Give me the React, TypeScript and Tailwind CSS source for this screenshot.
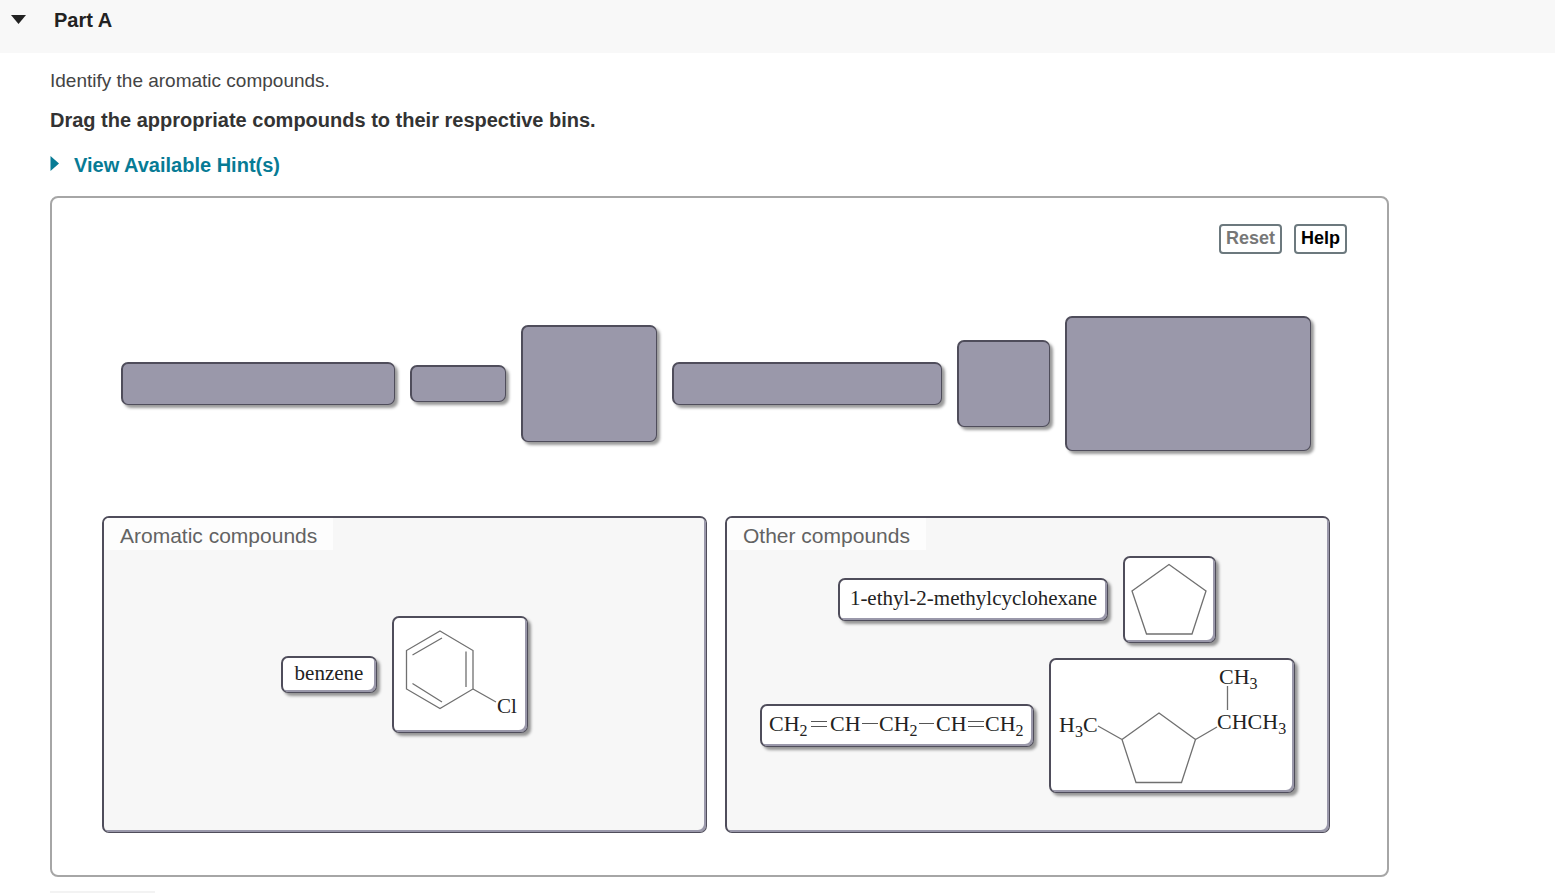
import React from "react";

interface ITileProps {
  className: string;
  children?: React.ReactNode;
}

interface IBinProps {
  title: string;
  children: React.ReactNode;
}

const slots = [
  "w-[274px] h-[43px]",
  "w-[96px] h-[37px]",
  "w-[136px] h-[117px]",
  "w-[270px] h-[43px]",
  "w-[93px] h-[87px]",
  "w-[246px] h-[135px]",
];

const Tile: React.FC<ITileProps> = ({ className, children }) => {
  return (
    <div
      draggable
      className={`flex shrink-0 cursor-move items-center justify-center rounded-[7px] border border-t-2 border-l-2 border-[#4f4d5b] bg-white font-['Liberation_Serif',serif] text-[21px] text-[#222] shadow-[inset_-2px_-2px_0_#9a98aa,3px_3px_3px_rgba(0,0,0,0.4)] ${className}`}
    >
      {children}
    </div>
  );
};

const Bin: React.FC<IBinProps> = ({ title, children }) => {
  return (
    <section className="flex min-h-[317px] flex-1 flex-col rounded-[7px] border border-t-2 border-l-2 border-[#4f4d5b] bg-[#f7f7f7] shadow-[inset_-2px_-2px_0_#9a98aa]">
      <h3 className="h-8 self-start rounded-tl-[5px] bg-[#fdfdfd] px-4 text-[21px] leading-9 text-[#636363]">
        {title}
      </h3>
      <div className="flex flex-1 flex-col items-center justify-center gap-[15px] pr-[2px] pb-[34px]">
        {children}
      </div>
    </section>
  );
};

const Chlorobenzene = () => (
  <svg width="133" height="114" viewBox="394 618 133 114" fill="none" stroke="#707070" strokeWidth="1.3">
    <path d="M440 631 L473 650.5 V689 L440 708.5 L406.500 689 V650.5 Z" />
    <path d="M412.500 655 L442 638 M466 651.500 V687 M412.500 683.500 L442 702 M473 689 L496 702" />
    <text x="497" y="713" fontSize="21" fill="#222" stroke="none">Cl</text>
  </svg>
);

const Cyclopentane = () => (
  <svg width="90" height="84" viewBox="1126 558 90 84" fill="none" stroke="#707070" strokeWidth="1.3">
    <path d="M1170 564.500 L1207 591 L1193 634 H1147.500 L1133 591 Z" />
  </svg>
);

const Pentadiene = () => (
  <svg width="271" height="40" viewBox="762 705 271 40" fontSize="22" fill="#222">
    <text x="769" y="730">CH<tspan dy="5" fontSize="16">2</tspan></text>
    <text x="830" y="730">CH</text>
    <text x="879" y="730">CH<tspan dy="5" fontSize="16">2</tspan></text>
    <text x="936" y="730">CH</text>
    <text x="985" y="730">CH<tspan dy="5" fontSize="16">2</tspan></text>
    <path
      d="M811 720.500 H827 M811 725.500 H827 M862 722.500 H878 M919 722.500 H934 M968 720.500 H984 M968 725.500 H984"
      stroke="#555"
      strokeWidth="1.2"
    />
  </svg>
);

const MethylIsopropylCyclopentane = () => (
  <svg width="243" height="132" viewBox="1051 660 243 132" fontSize="22" fill="#222">
    <path
      d="M1159 713 L1195.500 739.500 L1181.500 782.500 H1136 L1122 739.500 Z M1122 739.500 L1098 726 M1195.500 739.500 L1217 727 M1227.500 686 V710"
      fill="none"
      stroke="#707070"
      strokeWidth="1.3"
    />
    <text x="1059" y="732">H<tspan dy="5" fontSize="16">3</tspan><tspan dy="-5">C</tspan></text>
    <text x="1219" y="684">CH<tspan dy="5" fontSize="16">3</tspan></text>
    <text x="1217" y="729">CHCH<tspan dy="5" fontSize="16">3</tspan></text>
  </svg>
);

const App: React.FC = () => {
  return (
    <div className="bg-white font-['Liberation_Sans',Arial,sans-serif] text-[#333]">
      <header className="h-[53px] bg-[#f8f8f8] pt-2 pl-[11px]">
        <button className="flex items-center gap-7 text-xl leading-6 font-bold text-[#222]">
          <svg width="15" height="10" viewBox="0 0 15 10" fill="#222">
            <path d="M0 0 H15 L7.500 9 Z" />
          </svg>
          Part A
        </button>
      </header>

      <main className="px-[50px] pt-4">
        <p className="text-[19px] leading-6 text-[#444]">Identify the aromatic compounds.</p>
        <p className="mt-[15px] text-[20px] leading-6 font-bold">
          Drag the appropriate compounds to their respective bins.
        </p>
        <button className="mt-[21px] flex items-center gap-[15px] text-[20px] leading-6 font-bold text-[#077b95]">
          <svg width="9" height="18" viewBox="0 0 9 18" fill="#077b95">
            <path d="M0.500 0 L9 7.500 L0.500 15 Z" />
          </svg>
          View Available Hint(s)
        </button>

        <div className="mt-[19px] max-w-[1339px] rounded-lg border-2 border-[#a6a6a6] pt-[26px] pb-[42px]">
          <div className="flex justify-end gap-3 pr-10 text-lg leading-6 font-bold">
            <button className="h-[30px] rounded-[4px] border-2 border-[#6c797e] px-[5px] pb-1 text-[#777]">
              Reset
            </button>
            <button className="h-[30px] rounded-[4px] border-2 border-[#6c797e] px-[5px] pb-1 text-black">
              Help
            </button>
          </div>

          <div className="pr-[57px] pl-[50px]">
            <div className="mt-[62px] flex items-center justify-center gap-[15px]">
              {slots.map((size, i) => (
                <div
                  key={i}
                  className={`shrink-0 rounded-[7px] border border-t-2 border-l-2 border-[#4f4d5b] bg-[#9a98aa] shadow-[3px_3px_3px_rgba(0,0,0,0.4)] ${size}`}
                />
              ))}
            </div>

            <div className="mt-[65px] flex gap-[18px]">
              <Bin title="Aromatic compounds">
                <div className="flex items-center gap-[15px]">
                  <Tile className="w-[96px] h-[37px]">
                    <span className="pb-[2px]">benzene</span>
                  </Tile>
                  <Tile className="w-[136px] h-[117px]">
                    <Chlorobenzene />
                  </Tile>
                </div>
              </Bin>
              <Bin title="Other compounds">
                <div className="flex items-center gap-[15px]">
                  <Tile className="w-[270px] h-[43px]">
                    <span className="pb-[2px]">1-ethyl-2-methylcyclohexane</span>
                  </Tile>
                  <Tile className="w-[93px] h-[87px]">
                    <Cyclopentane />
                  </Tile>
                </div>
                <div className="flex items-center gap-[15px]">
                  <Tile className="w-[274px] h-[43px]">
                    <Pentadiene />
                  </Tile>
                  <Tile className="w-[246px] h-[135px]">
                    <MethylIsopropylCyclopentane />
                  </Tile>
                </div>
              </Bin>
            </div>
          </div>
        </div>

        <div className="mt-[14px] h-[2px] w-[105px] bg-[#f3f3f3]" />
      </main>
    </div>
  );
};

export default App;
